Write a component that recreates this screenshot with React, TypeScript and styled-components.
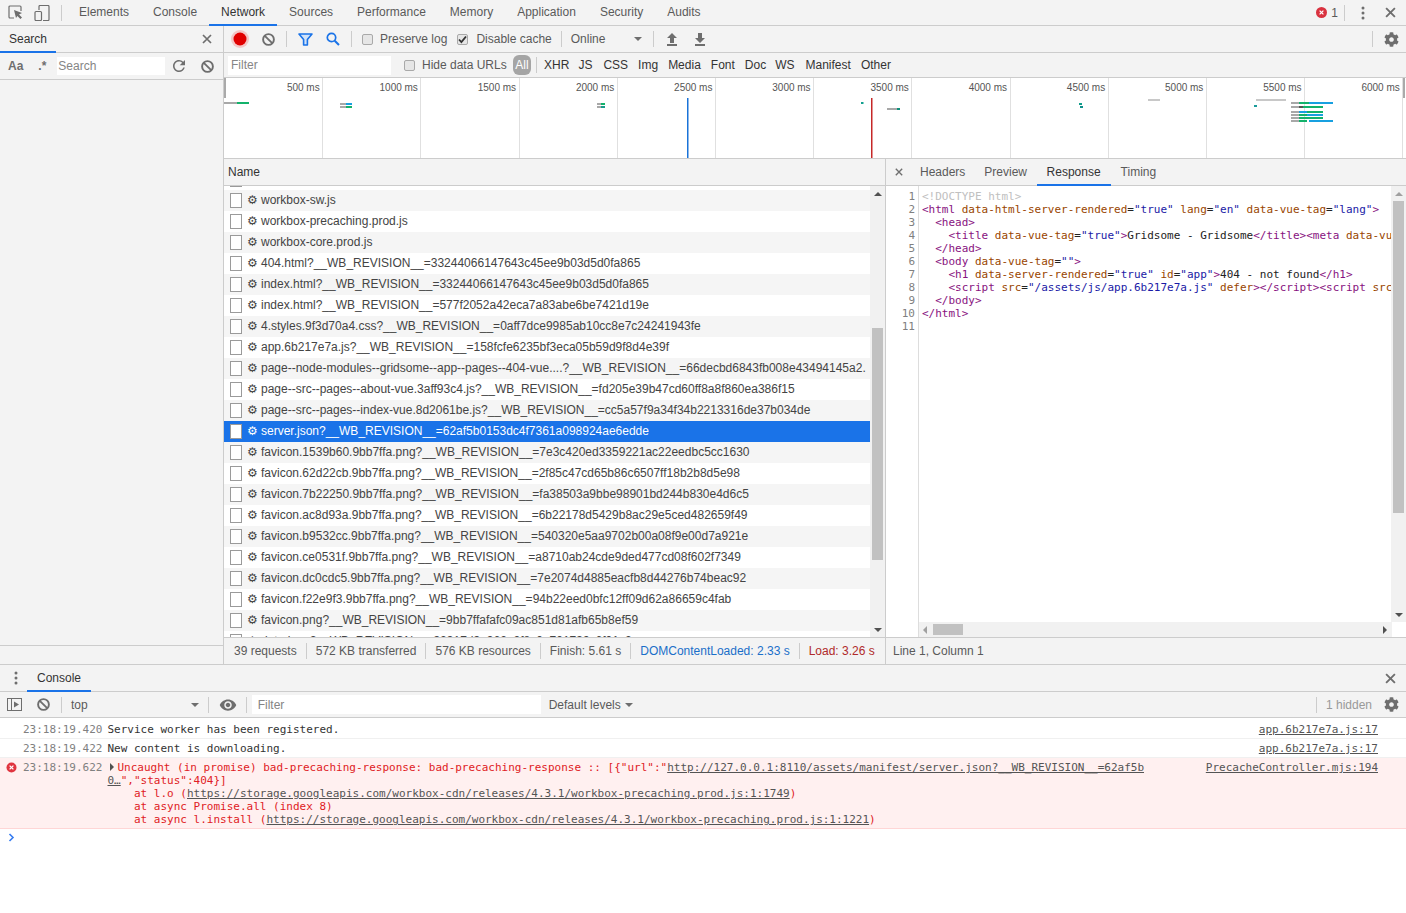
import React from 'react';
import styled, { createGlobalStyle } from 'styled-components';
import { FaCog } from 'react-icons/fa';
import { MdRefresh, MdVisibility } from 'react-icons/md';

const GlobalStyle = createGlobalStyle`
  html, body {
    margin: 0;
    padding: 0;
    background: #fff;
  }
  * {
    box-sizing: border-box;
  }
`;

const Page = styled.div`
  width: 1406px;
  height: 913px;
  overflow: hidden;
  display: flex;
  flex-direction: column;
  font-family: 'Liberation Sans', Arial, sans-serif;
  font-size: 12px;
  color: #5a5a5a;
  background: #fff;
`;

const Bar = styled.div<{ $h: number }>`
  flex: none;
  display: flex;
  align-items: center;
  height: ${(p) => p.$h}px;
  background: #f3f3f3;
  border-bottom: 1px solid #ccc;
  white-space: nowrap;
`;

const Tool = styled.div<{ $w?: number; $ml?: number }>`
  flex: none;
  display: flex;
  align-items: center;
  justify-content: center;
  width: ${(p) => p.$w ?? 28}px;
  height: 100%;
  margin-left: ${(p) => p.$ml ?? 0}px;
  color: #6e6e6e;
`;

const Sep = styled.div<{ $ml?: number; $mr?: number }>`
  flex: none;
  width: 1px;
  height: 16px;
  background: #ccc;
  margin-left: ${(p) => p.$ml ?? 4}px;
  margin-right: ${(p) => p.$mr ?? 4}px;
`;

const Fill = styled.div`
  flex: 1;
`;

const Tab = styled.div<{ $active?: boolean; $px?: number; $pt?: number }>`
  flex: none;
  display: flex;
  align-items: center;
  justify-content: center;
  height: calc(100% + 1px);
  padding: ${(p) => p.$pt ?? 0}px ${(p) => p.$px ?? 12}px 0;
  color: ${(p) => (p.$active ? '#333' : '#5a5a5a')};
  border-bottom: 2px solid ${(p) => (p.$active ? '#1a73e8' : 'transparent')};
`;

const TabStrip = styled.div<{ $ml?: number }>`
  display: flex;
  align-self: stretch;
  margin-left: ${(p) => p.$ml ?? 0}px;
`;

const Main = styled.div`
  flex: none;
  height: 639px;
  display: flex;
`;

const Sidebar = styled.div`
  flex: none;
  width: 224px;
  display: flex;
  flex-direction: column;
  background: #f3f3f3;
  border-right: 1px solid #ccc;
  border-bottom: 1px solid #ccc;
`;

const SidebarEmpty = styled.div`
  flex: 1;
  border-bottom: 1px solid #ccc;
`;

const SidebarFoot = styled.div`
  flex: none;
  height: 18px;
`;

const Label = styled.span<{ $ml?: number; $mr?: number; $color?: string; $bold?: boolean }>`
  flex: none;
  margin-left: ${(p) => p.$ml ?? 0}px;
  margin-right: ${(p) => p.$mr ?? 0}px;
  color: ${(p) => p.$color ?? '#5a5a5a'};
  font-weight: ${(p) => (p.$bold ? 700 : 400)};
`;

const InputBox = styled.div<{ $w: number; $ml?: number; $h?: number }>`
  flex: none;
  display: flex;
  align-items: center;
  width: ${(p) => p.$w}px;
  height: ${(p) => p.$h ?? 18}px;
  margin-left: ${(p) => p.$ml ?? 0}px;
  padding-left: 1px;
  background: #fff;
  color: #858585;
`;

const Network = styled.div`
  flex: 1;
  min-width: 0;
  display: flex;
  flex-direction: column;
`;

const Check = styled.span<{ $ml?: number }>`
  flex: none;
  display: flex;
  align-items: center;
  justify-content: center;
  width: 11px;
  height: 11px;
  margin-left: ${(p) => p.$ml ?? 0}px;
  border: 1px solid #a9a9a9;
  border-radius: 2px;
  background: #e6e6e6;
`;

const Pill = styled.span`
  flex: none;
  margin-left: 6px;
  height: 20px;
  line-height: 20px;
  padding: 0 2.5px;
  border-radius: 6px;
  background: #a5a5a5;
  color: #fff;
`;

const TypeLink = styled.span<{ $ml: number }>`
  flex: none;
  margin-left: ${(p) => p.$ml}px;
  color: #333;
`;

const Overview = styled.div`
  flex: none;
  position: relative;
  height: 81px;
  display: grid;
  grid-template-columns: repeat(12, 98.2px);
  padding-left: 1px;
  background: #fff;
  border-bottom: 1px solid #ccc;
`;

const Tick = styled.div`
  border-right: 1px solid #e0e0e0;
  padding: 3px 2.5px 0 0;
  text-align: right;
  font-size: 10px;
  line-height: 14px;
  color: #555;
`;

const Chart = styled.svg`
  position: absolute;
  left: 0;
  top: 0;
`;

const Split = styled.div`
  flex: 1;
  min-height: 0;
  display: flex;
`;

const ListPane = styled.div`
  flex: none;
  width: 662px;
  display: flex;
  flex-direction: column;
  border-right: 1px solid #ccc;
`;

const ListBody = styled.div`
  flex: 1;
  min-height: 0;
  display: flex;
`;

const Rows = styled.div`
  flex: 1;
  min-width: 0;
  overflow: hidden;
`;

const RowsInner = styled.div`
  margin-top: -17px;
`;

const Row = styled.div<{ $stripe: boolean; $selected: boolean }>`
  display: flex;
  align-items: center;
  height: 21px;
  padding: 0 0 2px 6px;
  white-space: nowrap;
  overflow: hidden;
  color: ${(p) => (p.$selected ? '#fff' : '#444')};
  background: ${(p) => (p.$selected ? '#1a73e8' : p.$stripe ? '#f5f5f5' : '#fff')};
`;

const RowBox = styled.span`
  flex: none;
  width: 12px;
  height: 15px;
  margin-top: 2px;
  background: #fff;
  border: 1px solid #9a9a9a;
`;

const RowGear = styled.span`
  flex: none;
  width: 14px;
  margin-left: 5px;
  font-family: 'DejaVu Sans', sans-serif;
  font-size: 12px;
`;

const ScrollY = styled.div`
  flex: none;
  width: 15px;
  display: flex;
  flex-direction: column;
  background: #f1f1f1;
`;

const ScrollTrack = styled.div`
  flex: 1;
  min-height: 0;
`;

const ThumbY = styled.div<{ $top: number; $h: number }>`
  width: 11px;
  margin: ${(p) => p.$top}px 0 0 2px;
  height: ${(p) => p.$h}px;
  background: #c1c1c1;
`;

const ScrollEnd = styled.div`
  flex: none;
  height: 15px;
  display: flex;
  align-items: center;
  justify-content: center;
`;

const Caret = styled.span<{ $dir: 'up' | 'down' | 'left' | 'right'; $color?: string }>`
  display: inline-block;
  width: 0;
  height: 0;
  border-style: solid;
  border-color: transparent;
  border-width: ${(p) =>
    p.$dir === 'up'
      ? '0 4px 4px 4px'
      : p.$dir === 'down'
        ? '4px 4px 0 4px'
        : p.$dir === 'left'
          ? '4px 4px 4px 0'
          : '4px 0 4px 4px'};
  ${(p) =>
    `border-${{ up: 'bottom', down: 'top', left: 'right', right: 'left' }[p.$dir]}-color: ${p.$color ?? '#505050'};`}
`;

const DetailPane = styled.div`
  flex: 1;
  min-width: 0;
  display: flex;
  flex-direction: column;
`;

const DetailBody = styled.div`
  flex: 1;
  min-height: 0;
  display: flex;
  background: #fff;
`;

const Gutter = styled.div`
  flex: none;
  width: 33px;
  padding: 4px 3px 0 0;
  border-right: 1px solid #ddd;
  text-align: right;
  font-family: 'DejaVu Sans Mono', monospace;
  font-size: 11px;
  line-height: 13px;
  color: #808080;
`;

const CodeCol = styled.div`
  flex: 1;
  min-width: 0;
  display: flex;
  flex-direction: column;
`;

const CodeRow = styled.div`
  flex: 1;
  min-height: 0;
  display: flex;
`;

const Code = styled.pre`
  flex: 1;
  min-width: 0;
  margin: 0;
  padding: 4px 0 0 3px;
  overflow: hidden;
  font-family: 'DejaVu Sans Mono', monospace;
  font-size: 11px;
  line-height: 13px;
  color: #222;
`;

const Tag = styled.span`
  color: #881280;
`;
const Attr = styled.span`
  color: #994500;
`;
const Val = styled.span`
  color: #1a1aa6;
`;
const Doc = styled.span`
  color: #c0c0c0;
`;

const ScrollX = styled.div`
  flex: none;
  height: 15px;
  display: flex;
  align-items: center;
`;

const TrackX = styled.div`
  flex: 1;
  height: 15px;
  display: flex;
  align-items: center;
  background: #f1f1f1;
`;

const ThumbX = styled.div`
  width: 30px;
  height: 11px;
  margin-left: 5px;
  background: #c1c1c1;
`;

const CornerEnd = styled.div`
  flex: none;
  width: 14px;
  height: 15px;
  background: #fff;
`;

const ArrowSlot = styled.div<{ $ml: number; $w: number }>`
  flex: none;
  width: ${(p) => p.$w}px;
  margin-left: ${(p) => p.$ml}px;
  display: flex;
  justify-content: center;
`;

const Status = styled.div`
  flex: none;
  height: 28px;
  display: flex;
  background: #f3f3f3;
  border-top: 1px solid #ccc;
  border-bottom: 1px solid #ccc;
`;

const StatusLeft = styled.div`
  flex: none;
  width: 662px;
  display: flex;
  align-items: center;
  padding-left: 10px;
  border-right: 1px solid #ccc;
  white-space: nowrap;
`;

const StatusRight = styled.div`
  flex: 1;
  display: flex;
  align-items: center;
  padding-left: 7px;
`;

const StatusSep = styled.span`
  flex: none;
  width: 1px;
  height: 16px;
  margin: 0 9px;
  background: #ccc;
`;

const Console = styled.div`
  flex: 1;
  min-height: 0;
  padding-top: 2px;
  background: #fff;
  font-family: 'DejaVu Sans Mono', monospace;
  font-size: 11px;
  line-height: 13px;
  color: #333;
`;

const Message = styled.div<{ $error?: boolean }>`
  position: relative;
  display: flex;
  padding: 3px 28px 2px 23px;
  border-bottom: 1px solid ${(p) => (p.$error ? '#ffd6d6' : '#f0f0f0')};
  background: ${(p) => (p.$error ? '#fff0f0' : '#fff')};
  color: ${(p) => (p.$error ? '#e01b24' : '#333')};
  white-space: pre;
`;

const ErrIcon = styled.span`
  position: absolute;
  left: 6px;
  top: 4px;
  line-height: 0;
`;

const Time = styled.span`
  flex: none;
  width: 84.5px;
  color: #808080;
`;

const MessageBody = styled.div`
  flex: 1;
  min-width: 0;
`;

const Source = styled.span`
  flex: none;
  color: #545454;
  text-decoration: underline;
`;

const Ulink = styled.span`
  color: #545454;
  text-decoration: underline;
`;

const Twisty = styled.span`
  display: inline-block;
  width: 8px;
  margin-left: 2px;
  vertical-align: 0;
`;

const Prompt = styled.div`
  padding: 3px 0 0 8px;
  color: #367cf1;
`;

const Close = ({ s = 10 }: { s?: number }) => (
  <svg width={s} height={s} viewBox="0 0 10 10">
    <path d="M1 1l8 8M9 1l-8 8" stroke="#6e6e6e" strokeWidth="1.7" fill="none" />
  </svg>
);

const Stop = ({ s = 13 }: { s?: number }) => (
  <svg width={s} height={s} viewBox="0 0 13 13">
    <circle cx="6.5" cy="6.5" r="5.4" stroke="#6e6e6e" strokeWidth="1.9" fill="none" />
    <path d="M2.8 2.8l7.4 7.4" stroke="#6e6e6e" strokeWidth="1.9" />
  </svg>
);

const Dots = () => (
  <svg width="4" height="14" viewBox="0 0 4 14">
    <circle cx="2" cy="2" r="1.5" fill="#6e6e6e" />
    <circle cx="2" cy="7" r="1.5" fill="#6e6e6e" />
    <circle cx="2" cy="12" r="1.5" fill="#6e6e6e" />
  </svg>
);

const ErrorBadge = ({ s = 11 }: { s?: number }) => (
  <svg width={s} height={s} viewBox="0 0 11 11">
    <circle cx="5.5" cy="5.5" r="5.5" fill="#d9323f" />
    <path d="M3.6 3.6l3.8 3.8M7.4 3.6l-3.8 3.8" stroke="#fff" strokeWidth="1.2" />
  </svg>
);

const Arrow = ({ down }: { down?: boolean }) => (
  <svg width="12" height="13" viewBox="0 0 12 13">
    {down ? (
      <path d="M4 0h4v5h3L6 10 1 5h3zM1 11h10v2H1z" fill="#6e6e6e" />
    ) : (
      <path d="M6 0l5 5H8v5H4V5H1zM1 11h10v2H1z" fill="#6e6e6e" />
    )}
  </svg>
);

const Tick2 = () => (
  <svg width="9" height="9" viewBox="0 0 9 9">
    <path d="M1 4.5l2.4 2.6L8 1.5" stroke="#333" strokeWidth="1.8" fill="none" />
  </svg>
);

const network = [
  '',
  'workbox-sw.js',
  'workbox-precaching.prod.js',
  'workbox-core.prod.js',
  '404.html?__WB_REVISION__=33244066147643c45ee9b03d5d0fa865',
  'index.html?__WB_REVISION__=33244066147643c45ee9b03d5d0fa865',
  'index.html?__WB_REVISION__=577f2052a42eca7a83abe6be7421d19e',
  '4.styles.9f3d70a4.css?__WB_REVISION__=0aff7dce9985ab10cc8e7c24241943fe',
  'app.6b217e7a.js?__WB_REVISION__=158fcfe6235bf3eca05b59d9f8d4e39f',
  'page--node-modules--gridsome--app--pages--404-vue....?__WB_REVISION__=66decbd6843fb008e43494145a2.',
  'page--src--pages--about-vue.3aff93c4.js?__WB_REVISION__=fd205e39b47cd60ff8a8f860ea386f15',
  'page--src--pages--index-vue.8d2061be.js?__WB_REVISION__=cc5a57f9a34f34b2213316de37b034de',
  'server.json?__WB_REVISION__=62af5b0153dc4f7361a098924ae6edde',
  'favicon.1539b60.9bb7ffa.png?__WB_REVISION__=7e3c420ed3359221ac22eedbc5cc1630',
  'favicon.62d22cb.9bb7ffa.png?__WB_REVISION__=2f85c47cd65b86c6507ff18b2b8d5e98',
  'favicon.7b22250.9bb7ffa.png?__WB_REVISION__=fa38503a9bbe98901bd244b830e4d6c5',
  'favicon.ac8d93a.9bb7ffa.png?__WB_REVISION__=6b22178d5429b8ac29e5ced482659f49',
  'favicon.b9532cc.9bb7ffa.png?__WB_REVISION__=540320e5aa9702b00a08f9e00d7a921e',
  'favicon.ce0531f.9bb7ffa.png?__WB_REVISION__=a8710ab24cde9ded477cd08f602f7349',
  'favicon.dc0cdc5.9bb7ffa.png?__WB_REVISION__=7e2074d4885eacfb8d44276b74beac92',
  'favicon.f22e9f3.9bb7ffa.png?__WB_REVISION__=94b22eed0bfc12ff09d62a86659c4fab',
  'favicon.png?__WB_REVISION__=9bb7ffafafc09ac851d81afb65b8ef59',
  'data.json?__WB_REVISION__=32317d3e962a2f8c0a701739c6f01c2e',
];

const ticks = [
  '500 ms', '1000 ms', '1500 ms', '2000 ms', '2500 ms', '3000 ms',
  '3500 ms', '4000 ms', '4500 ms', '5000 ms', '5500 ms', '6000 ms',
];

const mainTabs = ['Elements', 'Console', 'Network', 'Sources', 'Performance', 'Memory', 'Application', 'Security', 'Audits'];

const GREY = '#a8a8a8';
const GREEN = '#13b26b';
const BLUE = '#18a0e0';

// x, y, width, colour, relative to the overview panel
const bars: [number, number, number, string][] = [
  [0, 24, 13, GREY], [13, 24, 12, GREEN],
  [116, 25, 6, GREY], [122, 25, 6, BLUE], [116, 28, 6, GREY], [122, 28, 6, GREEN],
  [373, 25, 4, GREY], [377, 25, 4, GREEN], [373, 28, 4, GREY], [377, 28, 4, '#1a9b8b'],
  [637, 24, 2.5, '#12a08f'],
  [663, 30, 10, GREY], [673, 30, 3, '#0f8f7b'],
  [855, 25, 3, '#0f9d8b'], [856, 28, 3, '#0f8f8b'],
  [924, 21, 12, '#c8c8c8'],
  [1032, 21, 30, '#c8c8c8'],
  [1030, 27, 3, '#1a9b9b'],
  [1067, 24, 8, GREY], [1075, 24, 10, GREEN], [1085, 24, 24, BLUE],
  [1067, 28, 8, GREY], [1075, 28, 4, '#555'], [1079, 28, 20, GREEN],
  [1067, 33, 8, GREY], [1075, 33, 8, BLUE], [1083, 33, 16, GREEN],
  [1067, 36, 8, GREY], [1075, 36, 8, GREEN], [1083, 36, 16, BLUE],
  [1067, 39, 8, GREY], [1075, 39, 8, GREEN], [1083, 39, 16, GREEN],
  [1067, 42, 8, GREY], [1075, 42, 8, GREEN], [1085, 42, 24, BLUE],
];

const code = (
  <>
    <Doc>{'<!DOCTYPE html>'}</Doc>
    {'\n'}
    <Tag>{'<html '}</Tag>
    <Attr>data-html-server-rendered</Attr>=<Val>"true"</Val> <Attr>lang</Attr>=<Val>"en"</Val>{' '}
    <Attr>data-vue-tag</Attr>=<Val>"lang"</Val>
    <Tag>{'>'}</Tag>
    {'\n  '}
    <Tag>{'<head>'}</Tag>
    {'\n    '}
    <Tag>{'<title '}</Tag>
    <Attr>data-vue-tag</Attr>=<Val>"true"</Val>
    <Tag>{'>'}</Tag>Gridsome - Gridsome<Tag>{'</title><meta '}</Tag>
    <Attr>data-vue-tag</Attr>
    {'\n  '}
    <Tag>{'</head>'}</Tag>
    {'\n  '}
    <Tag>{'<body '}</Tag>
    <Attr>data-vue-tag</Attr>=<Val>""</Val>
    <Tag>{'>'}</Tag>
    {'\n    '}
    <Tag>{'<h1 '}</Tag>
    <Attr>data-server-rendered</Attr>=<Val>"true"</Val> <Attr>id</Attr>=<Val>"app"</Val>
    <Tag>{'>'}</Tag>404 - not found<Tag>{'</h1>'}</Tag>
    {'\n    '}
    <Tag>{'<script '}</Tag>
    <Attr>src</Attr>=<Val>"/assets/js/app.6b217e7a.js"</Val> <Attr>defer</Attr>
    <Tag>{'></script><script '}</Tag>
    <Attr>src</Attr>
    {'\n  '}
    <Tag>{'</body>'}</Tag>
    {'\n'}
    <Tag>{'</html>'}</Tag>
    {'\n'}
  </>
);

export default function App() {
  return (
    <Page>
      <GlobalStyle />
      <Bar $h={26}>
        <Tool $w={30}>
          <svg width="15" height="15" viewBox="0 0 15 15">
            <path d="M6 13H2a1 1 0 01-1-1V2a1 1 0 011-1h10a1 1 0 011 1v4" stroke="#6e6e6e" strokeWidth="1.2" fill="none" />
            <path d="M6 5l8 3-3 1.4 3 3-1.6 1.6-3-3L8 13z" fill="#6e6e6e" />
          </svg>
        </Tool>
        <Tool $w={24}>
          <svg width="16" height="16" viewBox="0 0 16 16">
            <path d="M5 5V1.5a1 1 0 011-1h8a1 1 0 011 1v13a1 1 0 01-1 1H9" stroke="#6e6e6e" strokeWidth="1.2" fill="none" />
            <rect x="1" y="6.5" width="6.5" height="9" rx="1" stroke="#6e6e6e" strokeWidth="1.2" fill="none" />
          </svg>
        </Tool>
        <Sep $ml={7} $mr={5} />
        <TabStrip>
          {mainTabs.map((t) => (
            <Tab key={t} $active={t === 'Network'}>
              {t}
            </Tab>
          ))}
        </TabStrip>
        <Fill />
        <ErrorBadge />
        <Label $ml={4}>1</Label>
        <Sep $ml={6} $mr={7} />
        <Tool $w={22}>
          <Dots />
        </Tool>
        <Tool $w={32}>
          <Close s={11} />
        </Tool>
      </Bar>

      <Main>
        <Sidebar>
          <Bar $h={27}>
            <TabStrip>
              <Tab $active $px={9} $pt={1}>
                <Label $color="#333">Search</Label>
              </Tab>
            </TabStrip>
            <Fill />
            <Tool $w={32}>
              <Close />
            </Tool>
          </Bar>
          <Bar $h={27}>
            <Label $ml={8} $bold $color="#6e6e6e">
              Aa
            </Label>
            <Label $ml={15} $bold $color="#6e6e6e">
              .*
            </Label>
            <InputBox $w={108} $ml={11}>
              Search
            </InputBox>
            <Tool $w={28}>
              <MdRefresh size={18} />
            </Tool>
            <Tool $w={28}>
              <Stop />
            </Tool>
          </Bar>
          <SidebarEmpty />
          <SidebarFoot />
        </Sidebar>

        <Network>
          <Bar $h={27}>
            <Tool $w={28} $ml={2}>
              <svg width="20" height="20" viewBox="0 0 20 20">
                <circle cx="10" cy="10" r="9" fill="#f4c7c7" />
                <circle cx="10" cy="10" r="6.5" fill="#e00000" />
              </svg>
            </Tool>
            <Tool $w={28}>
              <Stop />
            </Tool>
            <Sep />
            <Tool $w={28}>
              <svg width="15" height="13" viewBox="0 0 15 13">
                <path d="M1 1h13L9.4 6.6V12H5.6V6.6z" fill="#d2e3f8" stroke="#1a73e8" strokeWidth="1.6" strokeLinejoin="round" />
              </svg>
            </Tool>
            <Tool $w={28}>
              <svg width="14" height="14" viewBox="0 0 14 14">
                <circle cx="5.5" cy="5.5" r="4.2" stroke="#1a73e8" strokeWidth="1.7" fill="none" />
                <path d="M8.7 8.7l4.3 4.3" stroke="#1a73e8" strokeWidth="2" />
              </svg>
            </Tool>
            <Sep />
            <Check $ml={6} />
            <Label $ml={7}>Preserve log</Label>
            <Check $ml={10}>
              <Tick2 />
            </Check>
            <Label $ml={8}>Disable cache</Label>
            <Sep $ml={9} $mr={9} />
            <Label>Online</Label>
            <Tool $w={8} $ml={29}>
              <Caret $dir="down" $color="#6e6e6e" />
            </Tool>
            <Sep $ml={11} $mr={4} />
            <Tool $w={28}>
              <Arrow />
            </Tool>
            <Tool $w={28}>
              <Arrow down />
            </Tool>
            <Fill />
            <Sep $ml={0} $mr={3} />
            <Tool $w={30}>
              <FaCog size={15} />
            </Tool>
          </Bar>
          <Bar $h={25}>
            <InputBox $w={163} $ml={4} $h={19}>
              <Label $ml={2} $color="#858585">
                Filter
              </Label>
            </InputBox>
            <Check $ml={13} />
            <Label $ml={7}>Hide data URLs</Label>
            <Pill>All</Pill>
            <Sep $ml={5} $mr={7} />
            <TypeLink $ml={0}>XHR</TypeLink>
            <TypeLink $ml={9}>JS</TypeLink>
            <TypeLink $ml={11}>CSS</TypeLink>
            <TypeLink $ml={10}>Img</TypeLink>
            <TypeLink $ml={10}>Media</TypeLink>
            <TypeLink $ml={10}>Font</TypeLink>
            <TypeLink $ml={10}>Doc</TypeLink>
            <TypeLink $ml={9}>WS</TypeLink>
            <TypeLink $ml={11}>Manifest</TypeLink>
            <TypeLink $ml={10}>Other</TypeLink>
          </Bar>
          <Overview>
            {ticks.map((t) => (
              <Tick key={t}>{t}</Tick>
            ))}
            <Chart width="1182" height="80" viewBox="0 0 1182 80">
              <rect x="0" y="0" width="2" height="20" fill="#aaa" />
              <rect x="1179" y="0" width="2" height="20" fill="#aaa" />
              <rect x="463" y="20" width="1.5" height="60" fill="#1a73d8" />
              <rect x="647" y="20" width="1.5" height="60" fill="#c62828" />
              {bars.map(([x, y, w, c], i) => (
                <rect key={i} x={x} y={y} width={w} height="2" fill={c} />
              ))}
            </Chart>
          </Overview>
          <Split>
            <ListPane>
              <Bar $h={27}>
                <Label $ml={4} $color="#333">
                  Name
                </Label>
              </Bar>
              <ListBody>
                <Rows>
                  <RowsInner>
                    {network.map((name, i) => (
                      <Row key={i} $stripe={i % 2 === 1} $selected={name.startsWith('server.json')}>
                        <RowBox />
                        {name && <RowGear>⚙</RowGear>}
                        {name}
                      </Row>
                    ))}
                  </RowsInner>
                </Rows>
                <ScrollY>
                  <ScrollEnd>
                    <Caret $dir="up" />
                  </ScrollEnd>
                  <ScrollTrack>
                    <ThumbY $top={127} $h={232} />
                  </ScrollTrack>
                  <ScrollEnd>
                    <Caret $dir="down" />
                  </ScrollEnd>
                </ScrollY>
              </ListBody>
            </ListPane>
            <DetailPane>
              <Bar $h={27}>
                <Tool $w={26}>
                  <Close s={8} />
                </Tool>
                <TabStrip $ml={-1.5}>
                  <Tab $px={9.5} $pt={1}>Headers</Tab>
                  <Tab $px={9.5} $pt={1}>Preview</Tab>
                  <Tab $active $px={10} $pt={1}>
                    Response
                  </Tab>
                  <Tab $px={10} $pt={1}>Timing</Tab>
                </TabStrip>
              </Bar>
              <DetailBody>
                <Gutter>
                  {[1, 2, 3, 4, 5, 6, 7, 8, 9, 10, 11].map((n) => (
                    <div key={n}>{n}</div>
                  ))}
                </Gutter>
                <CodeCol>
                  <CodeRow>
                    <Code>{code}</Code>
                    <ScrollY>
                      <ScrollEnd>
                        <Caret $dir="up" $color="#a0a0a0" />
                      </ScrollEnd>
                      <ScrollTrack>
                        <ThumbY $top={0} $h={312} />
                      </ScrollTrack>
                      <ScrollEnd>
                        <Caret $dir="down" />
                      </ScrollEnd>
                    </ScrollY>
                  </CodeRow>
                  <ScrollX>
                    <TrackX>
                      <ArrowSlot $ml={2} $w={7}>
                        <Caret $dir="left" $color="#a0a0a0" />
                      </ArrowSlot>
                      <ThumbX />
                      <Fill />
                      <Caret $dir="right" />
                      <ArrowSlot $ml={0} $w={5} />
                    </TrackX>
                    <CornerEnd />
                  </ScrollX>
                </CodeCol>
              </DetailBody>
            </DetailPane>
          </Split>
          <Status>
            <StatusLeft>
              <Label>39 requests</Label>
              <StatusSep />
              <Label>572 KB transferred</Label>
              <StatusSep />
              <Label>576 KB resources</Label>
              <StatusSep />
              <Label>Finish: 5.61 s</Label>
              <StatusSep />
              <Label $color="#1a6fc9">DOMContentLoaded: 2.33 s</Label>
              <StatusSep />
              <Label $color="#b02a2a">Load: 3.26 s</Label>
            </StatusLeft>
            <StatusRight>
              <Label>Line 1, Column 1</Label>
            </StatusRight>
          </Status>
        </Network>
      </Main>

      <Bar $h={27}>
        <Tool $w={31}>
          <Dots />
        </Tool>
        <TabStrip $ml={-4}>
          <Tab $active $px={10} $pt={1}>
            <Label $color="#333">Console</Label>
          </Tab>
        </TabStrip>
        <Fill />
        <Tool $w={31}>
          <Close s={11} />
        </Tool>
      </Bar>
      <Bar $h={26}>
        <Tool $w={29}>
          <svg width="15" height="13" viewBox="0 0 15 13">
            <rect x="0.5" y="0.5" width="14" height="12" stroke="#6e6e6e" fill="none" />
            <path d="M4.5 1v11" stroke="#6e6e6e" />
            <path d="M7 3.5l5 3-5 3z" fill="#6e6e6e" />
          </svg>
        </Tool>
        <Tool $w={29}>
          <Stop />
        </Tool>
        <Sep $ml={3} $mr={9} />
        <Label>top</Label>
        <Tool $w={8} $ml={103}>
          <Caret $dir="down" $color="#6e6e6e" />
        </Tool>
        <Sep $ml={9} $mr={7} />
        <Tool $w={24}>
          <MdVisibility size={18} />
        </Tool>
        <Sep $ml={6} $mr={5} />
        <InputBox $w={289} $h={19}>
          <Label $ml={5} $color="#858585">
            Filter
          </Label>
        </InputBox>
        <Label $ml={8}>Default levels</Label>
        <Tool $w={8} $ml={4}>
          <Caret $dir="down" $color="#6e6e6e" />
        </Tool>
        <Fill />
        <Sep $mr={9} />
        <Label $color="#999" $mr={4}>
          1 hidden
        </Label>
        <Tool $w={30}>
          <FaCog size={15} />
        </Tool>
      </Bar>

      <Console>
        <Message>
          <Time>23:18:19.420</Time>
          <MessageBody>Service worker has been registered.</MessageBody>
          <Source>app.6b217e7a.js:17</Source>
        </Message>
        <Message>
          <Time>23:18:19.422</Time>
          <MessageBody>New content is downloading.</MessageBody>
          <Source>app.6b217e7a.js:17</Source>
        </Message>
        <Message $error>
          <ErrIcon>
            <svg width="11" height="11" viewBox="0 0 11 11">
              <circle cx="5.5" cy="5.5" r="5" fill="#e0343f" />
              <path d="M3.6 3.6l3.8 3.8M7.4 3.6l-3.8 3.8" stroke="#fff" strokeWidth="1.3" />
            </svg>
          </ErrIcon>
          <Time>23:18:19.622</Time>
          <MessageBody>
            <div>
              <Twisty>
                <Caret $dir="right" />
              </Twisty>
              {'Uncaught (in promise) bad-precaching-response: bad-precaching-response :: [{"url":"'}
              <Ulink>http://127.0.0.1:8110/assets/manifest/server.json?__WB_REVISION__=62af5b</Ulink>
            </div>
            <div>
              <Ulink>0…</Ulink>
              {'","status":404}]'}
            </div>
            <div>
              {'    at l.o ('}
              <Ulink>https://storage.googleapis.com/workbox-cdn/releases/4.3.1/workbox-precaching.prod.js:1:1749</Ulink>)
            </div>
            <div>{'    at async Promise.all (index 8)'}</div>
            <div>
              {'    at async l.install ('}
              <Ulink>https://storage.googleapis.com/workbox-cdn/releases/4.3.1/workbox-precaching.prod.js:1:1221</Ulink>)
            </div>
          </MessageBody>
          <Source>PrecacheController.mjs:194</Source>
        </Message>
        <Prompt>
          <svg width="7" height="9" viewBox="0 0 7 9">
            <path d="M1.5 1l3.5 3.5L1.5 8" stroke="#367cf1" strokeWidth="1.6" fill="none" />
          </svg>
        </Prompt>
      </Console>
    </Page>
  );
}
